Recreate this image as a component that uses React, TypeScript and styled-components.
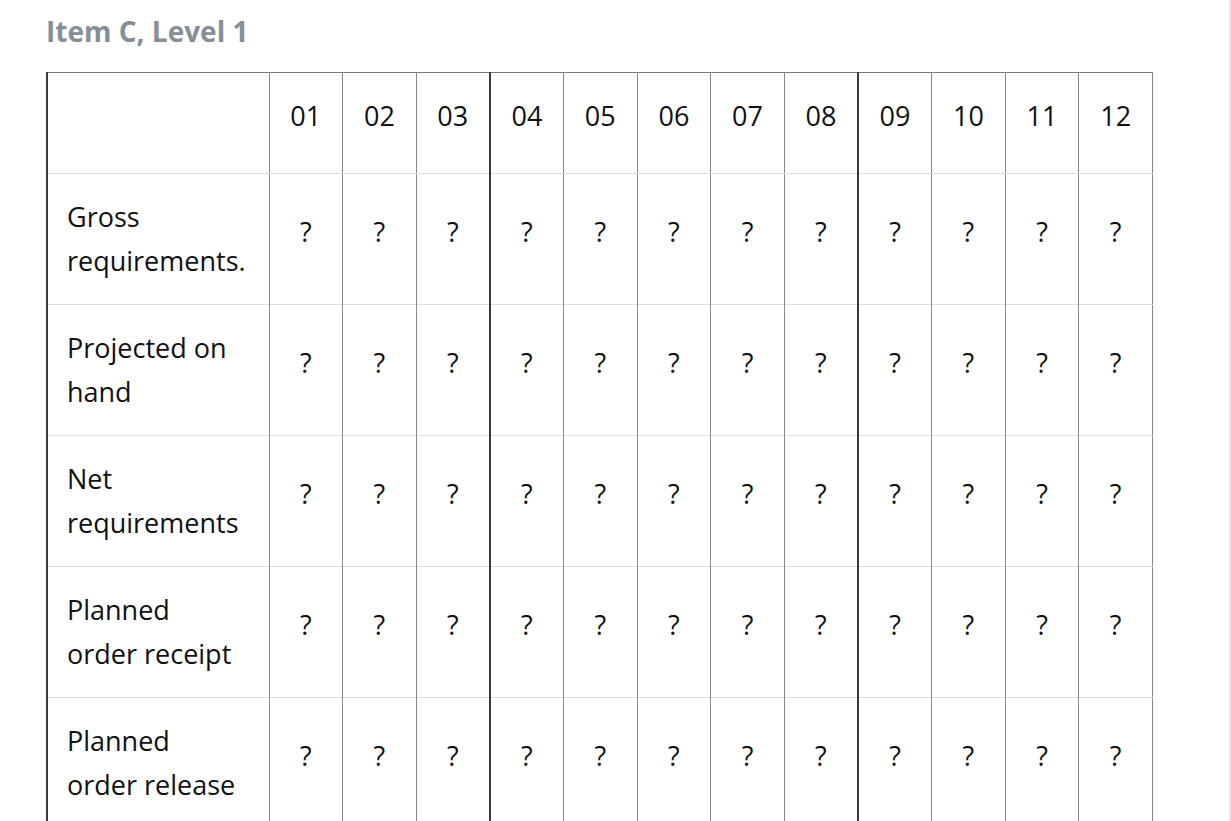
import { Fragment } from 'react'
import styled, { createGlobalStyle } from 'styled-components'

const months = ['01', '02', '03', '04', '05', '06', '07', '08', '09', '10', '11', '12']
const rows = [
  ['Gross', 'requirements.'],
  ['Projected on', 'hand'],
  ['Net', 'requirements'],
  ['Planned', 'order receipt'],
  ['Planned', 'order release'],
]
const strong = (i: number) => i === 3 || i === 8

const App = () => {
  return (
    <>
      <GlobalStyle />
      <Page>
        <Title>Item C, Level 1</Title>
        <Table>
          <colgroup>
            <Col $label />
            {months.map((m) => (
              <Col key={m} />
            ))}
          </colgroup>
          <thead>
            <tr>
              <LabelHead />
              {months.map((m, i) => (
                <MonthHead key={m} $strong={strong(i)}>
                  {m}
                </MonthHead>
              ))}
            </tr>
          </thead>
          <tbody>
            {rows.map((r) => (
              <Row key={r.join(' ')}>
                <Label>
                  {r.map((line, j) => (
                    <Fragment key={line}>
                      {j > 0 && <br />}
                      {line}
                    </Fragment>
                  ))}
                </Label>
                {months.map((m, i) => (
                  <Cell key={m} $strong={strong(i)}>
                    ?
                  </Cell>
                ))}
              </Row>
            ))}
          </tbody>
        </Table>
      </Page>
    </>
  )
}

const GlobalStyle = createGlobalStyle`
  html, body {
    margin: 0;
    padding: 0;
    background: #fff;
  }
  body {
    font-family: "Segoe UI", "Open Sans", "Noto Sans", sans-serif;
    color: #111;
  }
`

const { Page, Title, Table, Col, LabelHead, MonthHead, Row, Label, Cell } = {
  Page: styled.div`
    box-sizing: border-box;
    width: 1231px;
    height: 821px;
    overflow: hidden;
    padding: 12px 0 0 46px;
    border-right: 2px solid #e6e6e6;
  `,
  Title: styled.h2`
    margin: 0 0 22px;
    font-size: 28px;
    line-height: 38px;
    font-weight: 700;
    color: #868e96;
  `,
  Table: styled.table`
    width: 1107px;
    table-layout: fixed;
    border-collapse: collapse;
    border-top: 1px solid #7a7a7a;
    border-left: 2px solid #3a3a3a;
    border-right: 1px solid #888;
    font-size: 27px;
    line-height: 44px;
  `,
  Col: styled.col<{ $label?: boolean }>`
    width: ${(p) => (p.$label ? '222px' : 'auto')};
  `,
  LabelHead: styled.th`
    padding: 21px 19px 35px;
    border-bottom: 1px solid #dedede;
  `,
  MonthHead: styled.th<{ $strong?: boolean }>`
    padding: 21px 0 35px;
    font-weight: 400;
    text-align: center;
    border-bottom: 1px solid #dedede;
    border-left: ${(p) => (p.$strong ? '2px solid #3a3a3a' : '1px solid #888')};
  `,
  Row: styled.tr`
    border-bottom: 1px solid #dedede;
  `,
  Label: styled.td`
    padding: 21px 19px;
    text-align: left;
    vertical-align: middle;
    white-space: nowrap;
  `,
  Cell: styled.td<{ $strong?: boolean }>`
    padding: 14px 0 28px;
    text-align: center;
    vertical-align: middle;
    border-left: ${(p) => (p.$strong ? '2px solid #3a3a3a' : '1px solid #888')};
  `,
}

export default App
